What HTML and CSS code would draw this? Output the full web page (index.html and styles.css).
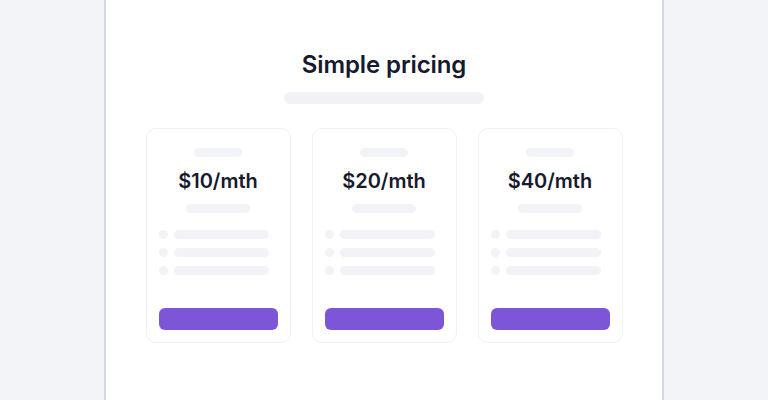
FILE: index.html
```html
<!DOCTYPE html>
<html lang="en">
<head>
<meta charset="utf-8">
<title>Simple pricing</title>
<link rel="stylesheet" href="styles.css">
</head>
<body>
<main class="panel">
  <h1 class="title">Simple pricing</h1>
  <div class="subtitle-bar"></div>
  <section class="plans">
    <div class="plan">
      <div class="sk sk-label"></div>
      <div class="price">$10/mth</div>
      <div class="sk sk-sub"></div>
      <ul class="features">
        <li><span class="dot"></span><span class="sk sk-line"></span></li>
        <li><span class="dot"></span><span class="sk sk-line"></span></li>
        <li><span class="dot"></span><span class="sk sk-line"></span></li>
      </ul>
      <div class="btn"></div>
    </div>
    <div class="plan">
      <div class="sk sk-label"></div>
      <div class="price">$20/mth</div>
      <div class="sk sk-sub"></div>
      <ul class="features">
        <li><span class="dot"></span><span class="sk sk-line"></span></li>
        <li><span class="dot"></span><span class="sk sk-line"></span></li>
        <li><span class="dot"></span><span class="sk sk-line"></span></li>
      </ul>
      <div class="btn"></div>
    </div>
    <div class="plan">
      <div class="sk sk-label"></div>
      <div class="price">$40/mth</div>
      <div class="sk sk-sub"></div>
      <ul class="features">
        <li><span class="dot"></span><span class="sk sk-line"></span></li>
        <li><span class="dot"></span><span class="sk sk-line"></span></li>
        <li><span class="dot"></span><span class="sk sk-line"></span></li>
      </ul>
      <div class="btn"></div>
    </div>
  </section>
</main>
</body>
</html>
```

FILE: styles.css
```css
* { box-sizing: border-box; }
html, body { margin: 0; padding: 0; }
body {
  background: #f3f4f8;
  font-family: Inter, "Noto Sans", "Liberation Sans", sans-serif;
  height: 400px;
  overflow: hidden;
  display: flex;
  justify-content: center;
}
.panel {
  width: 560px;
  height: 400px;
  background: #ffffff;
  border-left: 2px solid #d6d8e1;
  border-right: 2px solid #d6d8e1;
  padding-top: 49px;
  display: flex;
  flex-direction: column;
  align-items: center;
}
.title {
  margin: 0;
  font-size: 24px;
  line-height: 32px;
  font-weight: 600;
  color: #171a2c;
  letter-spacing: -0.1px;
}
.subtitle-bar {
  width: 200px;
  height: 12px;
  border-radius: 6px;
  background: #f1f2f6;
  margin-top: 11px;
}
.plans {
  display: flex;
  gap: 21px;
  margin-top: 24px;
}
.plan {
  width: 145px;
  height: 215px;
  border: 1px solid #f0f1f4;
  border-radius: 10px;
  padding: 19px 12px 12px;
  display: flex;
  flex-direction: column;
  align-items: center;
}
.sk {
  display: block;
  background: #f1f3f6;
  border-radius: 5px;
}
.sk-label { width: 48px; height: 9px; }
.price {
  margin-top: 10px;
  font-size: 20px;
  line-height: 28px;
  font-weight: 600;
  color: #171a2c;
}
.sk-sub { width: 64px; height: 9px; margin-top: 9px; }
.features {
  list-style: none;
  margin: 17px 0 0;
  padding: 0;
  align-self: stretch;
  display: flex;
  flex-direction: column;
  gap: 9px;
}
.features li {
  display: flex;
  align-items: center;
  gap: 6px;
  height: 9px;
}
.dot {
  width: 9px;
  height: 9px;
  border-radius: 50%;
  background: #f1f3f6;
}
.sk-line { width: 95px; height: 9px; }
.btn {
  margin-top: auto;
  align-self: stretch;
  height: 22px;
  border-radius: 6px;
  background: #7d56d7;
}
```
